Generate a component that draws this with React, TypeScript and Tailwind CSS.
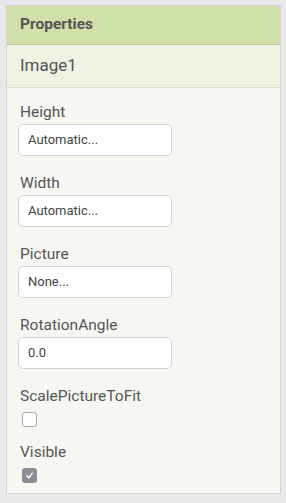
const props = [
  { name: 'Height', value: 'Automatic...' },
  { name: 'Width', value: 'Automatic...' },
  { name: 'Picture', value: 'None...' },
  { name: 'RotationAngle', value: '0.0' },
];

const checks = [
  { name: 'ScalePictureToFit', checked: false },
  { name: 'Visible', checked: true },
];

export default function App() {
  return (
    <div className="w-[286px] h-[503px] bg-[#e9e9e9] pt-[5px] pl-[6px] pr-[5px] font-['Roboto','Liberation_Sans',sans-serif]">
      <div className="w-[275px] h-[489px] border border-[#d4d4d4] bg-[#f7f7f2] flex flex-col">
        {/* header */}
        <div className="h-[39px] bg-[#d0e0aa] border-b border-[#b9c89a] flex items-center pl-[13px]">
          <span className="text-[15.5px] font-bold text-[#555]">Properties</span>
        </div>
        <div className="h-[43px] bg-[#eef2e1] border-b border-[#dcdfd2] flex items-center pl-[13px]">
          <span className="text-[17px] text-[#555]">Image1</span>
        </div>

        <div className="flex flex-col pl-[11px] pt-[14px]">
          {props.map((p) => (
            <div key={p.name} className="flex flex-col mb-[17px]">
              <div className="pl-[2px] text-[15.5px] leading-[20px] text-[#555] mb-[2px]">{p.name}</div>
              <div className="w-[154px] h-[32px] bg-white border border-[#d3d3d3] rounded-[5px] flex items-center pl-[9px] text-[13px] text-[#444]">
                {p.value}
              </div>
            </div>
          ))}
          {checks.map((c, i) => (
            <div key={c.name} className={i === 0 ? 'flex flex-col mb-[15px]' : 'flex flex-col'}>
              <div className="pl-[2px] text-[15.5px] leading-[20px] text-[#555] mb-[6px]">{c.name}</div>
              <div className="ml-[4px]">
                {c.checked ? (
                  <div className="w-[15px] h-[15px] rounded-[3px] bg-[#8c8c92] flex items-center justify-center">
                    <svg width="9" height="9" viewBox="0 0 10 10" fill="none">
                      <path d="M2 5.3 L4.2 7.5 L8 2.6" stroke="white" strokeWidth="1.6" strokeLinecap="round" strokeLinejoin="round" />
                    </svg>
                  </div>
                ) : (
                  <div className="w-[15px] h-[15px] rounded-[3px] bg-white border border-[#a9a9a9]" />
                )}
              </div>
            </div>
          ))}
        </div>
      </div>
    </div>
  );
}
